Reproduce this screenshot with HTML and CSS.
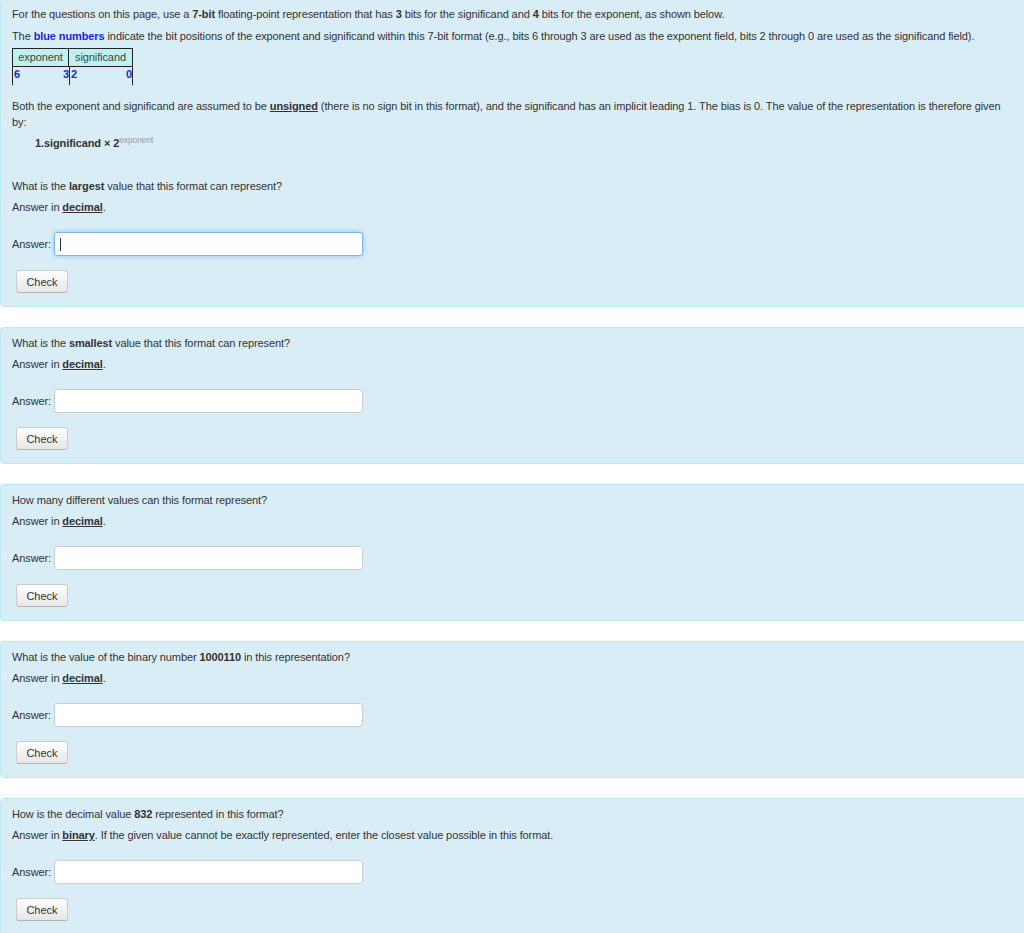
FILE: index.html
```html
<!DOCTYPE html>
<html>
<head>
<meta charset="utf-8">
<link rel="stylesheet" href="styles.css">
</head>
<body>
<div class="panel first">
  <p>For the questions on this page, use a <b>7-bit</b> floating-point representation that has <b>3</b> bits for the significand and <b>4</b> bits for the exponent, as shown below.</p>
  <p>The <b class="blue">blue numbers</b> indicate the bit positions of the exponent and significand within this 7-bit format (e.g., bits 6 through 3 are used as the exponent field, bits 2 through 0 are used as the significand field).</p>
  <div class="bits">
    <div class="bits-head">
      <div class="cell exp">exponent</div>
      <div class="cell sig">significand</div>
    </div>
    <div class="bits-nums">
      <div class="num exp"><span>6</span><span>3</span></div>
      <div class="num sig last"><span>2</span><span>0</span></div>
    </div>
  </div>
  <p class="both">Both the exponent and significand are assumed to be <b class="u">unsigned</b> (there is no sign bit in this format), and the significand has an implicit leading 1. The bias is 0. The value of the representation is therefore given by:</p>
  <div class="formula"><b>1.significand × 2</b><sup>exponent</sup></div>
  <div class="question">
    <p>What is the <b>largest</b> value that this format can represent?</p>
    <p>Answer in <b class="u">decimal</b>.</p>
    <div class="answer"><label>Answer:</label><div class="field focused"><input type="text"><span class="caret"></span></div></div>
    <button class="check">Check</button>
  </div>
</div>

<div class="panel">
  <p>What is the <b>smallest</b> value that this format can represent?</p>
  <p>Answer in <b class="u">decimal</b>.</p>
  <div class="answer"><label>Answer:</label><div class="field"><input type="text"></div></div>
  <button class="check">Check</button>
</div>

<div class="panel">
  <p>How many different values can this format represent?</p>
  <p>Answer in <b class="u">decimal</b>.</p>
  <div class="answer"><label>Answer:</label><div class="field"><input type="text"></div></div>
  <button class="check">Check</button>
</div>

<div class="panel">
  <p>What is the value of the binary number <b>1000110</b> in this representation?</p>
  <p>Answer in <b class="u">decimal</b>.</p>
  <div class="answer"><label>Answer:</label><div class="field"><input type="text"></div></div>
  <button class="check">Check</button>
</div>

<div class="panel">
  <p>How is the decimal value <b>832</b> represented in this format?</p>
  <p>Answer in <b class="u">binary</b>. If the given value cannot be exactly represented, enter the closest value possible in this format.</p>
  <div class="answer"><label>Answer:</label><div class="field"><input type="text"></div></div>
  <button class="check">Check</button>
</div>
</body>
</html>
```

FILE: styles.css
```css
html, body {
  margin: 0;
  padding: 0;
  overflow-x: hidden;
  background: #fff;
}
body {
  font-family: "Liberation Sans", Arial, sans-serif;
  font-size: 11px;
  letter-spacing: -0.1px;
  color: #333;
}
.panel {
  background: #d9edf7;
  border: 1px solid #bce8f1;
  border-radius: 4px;
  padding: 8px 31px 13px 11px;
  margin: 0 -20px 20px 0;
}
.panel.first {
  margin-top: -2px;
}
p {
  margin: 0 0 6px;
  line-height: 15px;
}
.first > p:nth-child(2) {
  margin-top: 7px;
}
b { font-weight: bold; }
.blue { color: #2323e0; }
.u { text-decoration: underline; }

.bits {
  margin: -2px 0 0;
  width: 121px;
}
.bits-head {
  display: flex;
  border: 1px solid #222;
  background: #bff0f0;
}
.cell {
  height: 17px;
  line-height: 17px;
  text-align: center;
  color: #444;
}
.cell.exp { width: 55px; border-right: 1px solid #222; }
.cell.sig { flex: 1; }
.bits-nums {
  display: flex;
  height: 18px;
}
.num {
  display: flex;
  justify-content: space-between;
  border-left: 1px solid #222;
  color: #2323e0;
  font-weight: bold;
  line-height: 15px;
  padding-left: 1px;
}
.num.exp { width: 55px; }
.num.sig { flex: 1; border-right: 1px solid #222; }

p.both {
  margin: 13px 0 3px;
  line-height: 16px;
}
.formula {
  margin: 0 0 0 23px;
  padding-top: 3px;
  height: 15px;
  line-height: 15px;
  color: #333;
}
.formula sup {
  font-size: 8.5px;
  line-height: 0;
  color: #999;
  vertical-align: 4px;
}
.question {
  margin-top: 28px;
}
.answer {
  display: flex;
  align-items: center;
  margin-top: 17px;
}
label {
  margin-right: 3px;
}
.field {
  position: relative;
  width: 309px;
  height: 24px;
}
.field input {
  box-sizing: border-box;
  width: 100%;
  height: 100%;
  margin: 0;
  border: 1px solid #ccc;
  border-radius: 3px;
  background: #fff;
  font: inherit;
  padding: 2px 6px;
  outline: none;
}
.field.focused input {
  border-color: #7cb6ea;
  box-shadow: 0 0 4px rgba(102, 175, 233, 0.7);
}
.caret {
  position: absolute;
  left: 6px;
  top: 6px;
  width: 1px;
  height: 13px;
  background: #333;
}
.check {
  display: block;
  margin: 14px 0 0 4px;
  width: 52px;
  height: 23px;
  padding: 0;
  font: inherit;
  color: #333;
  background: linear-gradient(#fff, #e6e6e6);
  border: 1px solid #ccc;
  border-bottom-color: #b3b3b3;
  border-radius: 3px;
}
```
